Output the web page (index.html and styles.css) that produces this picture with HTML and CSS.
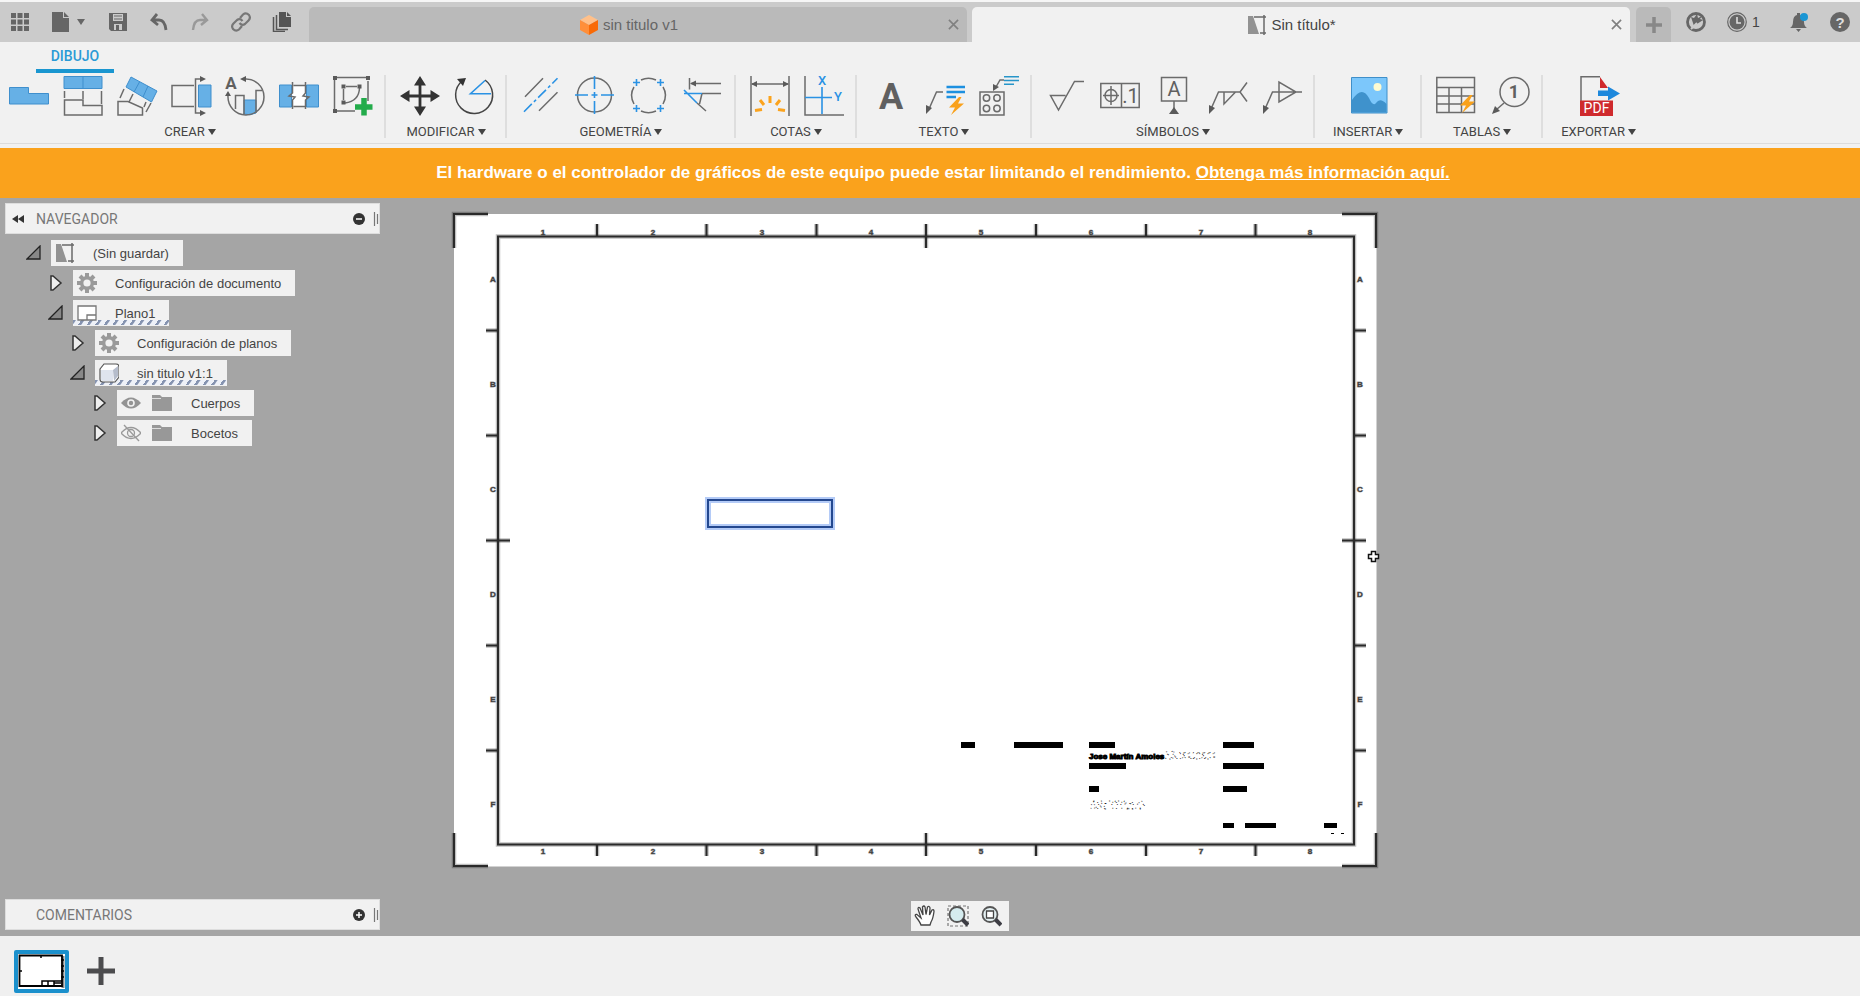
FILE: index.html
```html
<!DOCTYPE html>
<html lang="es">
<head>
  <meta charset="UTF-8">
  <meta name="viewport" content="width=device-width, initial-scale=1.0">
  <title>Sin título*</title>
  <link rel="stylesheet" href="styles.css">
</head>
<body>
  <svg class="defs" aria-hidden="true">
    <symbol id="i-gear" viewBox="0 0 20 20">
      <g stroke="#9a9a9a" stroke-width="4"><path d="M10 0V20M0 10H20M3 3L17 17M17 3L3 17"/></g>
      <circle cx="10" cy="10" r="7" fill="#9a9a9a"/><circle cx="10" cy="10" r="3.6" fill="#f1f1f1"/>
    </symbol>
    <symbol id="i-drawing" viewBox="0 0 20 20">
      <path d="M1 1H6L12 19H1Z" fill="#929292"/>
      <path d="M7 2H19M17 0V20M13 18H19" stroke="#6a6a6a" stroke-width="1.5" fill="none"/>
    </symbol>
    <symbol id="i-open" viewBox="0 0 16 16"><path d="M14 1V14H1Z" fill="#888" stroke="#222" stroke-width="1.3"/></symbol>
    <symbol id="i-closed" viewBox="0 0 16 16"><path d="M3 1H5L13 8L5 15H3Z" fill="#eee" stroke="#333" stroke-width="1.5"/></symbol>
    <symbol id="i-folder" viewBox="0 0 22 18"><path d="M1 1H9L11 3H21V17H1Z" fill="#989898"/><path d="M1 4.5H10" stroke="#ddd"/></symbol>
    <symbol id="i-close" viewBox="0 0 12 12"><path d="M1 1L11 11M11 1L1 11" stroke="#808080" stroke-width="1.8"/></symbol>
    <symbol id="i-bolt" viewBox="0 0 15 18"><path d="M10 0L0 10.5H6L2 18L15 6.5H9L12.500 0Z" fill="#f9a11b"/></symbol>
    <symbol id="i-grip" viewBox="0 0 6 14"><path d="M1.500 0V14M4.500 2V12" stroke="#777" stroke-width="1.200"/></symbol>
  </svg>

  <!-- Barra superior -->
  <header class="topbar">
    <div class="quick">
      <button aria-label="Panel de datos"><svg viewBox="0 0 20 20"><path d="M1 1h5v5H1zM7.500 1h5v5h-5zM14 1h5v5h-5zM1 7.500h5v5H1zM7.500 7.500h5v5h-5zM14 7.500h5v5h-5zM1 14h5v5H1zM7.500 14h5v5h-5zM14 14h5v5h-5z" fill="#666"/></svg></button>
      <button class="file" aria-label="Archivo"><svg viewBox="0 0 20 20"><path d="M1 0H12V6H18V20H1ZM13 0L18 5H13Z" fill="#666"/></svg><i class="caret"></i></button>
      <button aria-label="Guardar"><svg viewBox="0 0 20 20"><path d="M1 1H19V19H3L1 17Z" fill="#666"/><path d="M5 2H15V9H5ZM6 12H14V18H6Z" fill="#cbcbcb"/><path d="M6 4H14M6 7H14" stroke="#666" stroke-width="1.200"/><path d="M8 13V19H11V13Z" fill="#666"/></svg></button>
      <button aria-label="Deshacer"><svg viewBox="0 0 20 20"><path d="M8 2L3 8L9 13M3 8H10Q16 8 17 18" fill="none" stroke="#666" stroke-width="2.800"/></svg></button>
      <button aria-label="Rehacer"><svg viewBox="0 0 20 20"><path d="M12 2L17 8L11 13M17 8H10Q4 8 3 18" fill="none" stroke="#999" stroke-width="2.400"/></svg></button>
      <button aria-label="Vínculo"><svg viewBox="0 0 20 20"><g fill="none" stroke="#777" stroke-width="2.200"><path d="M9 6L12 2.500Q15 0 18 3Q20 6 17.500 8.500L14 12Q11 14 8.500 11"/><path d="M11 14L8 17.500Q5 20 2 17Q0 14 2.500 11.500L6 8Q9 6 11.500 9"/></g></svg></button>
      <button aria-label="Copias"><svg viewBox="0 0 20 20"><path d="M7 0H14V5H19V15H7ZM15 0L19 4H15Z" fill="#555"/><path d="M4.500 3V17.500H16M1.500 5V19.500H13" fill="none" stroke="#555" stroke-width="1.500"/></svg></button>
    </div>
    <nav class="tabs">
      <div class="tab">
        <a class="tab-title" href="#"><svg class="ico" viewBox="0 0 20 20"><path d="M10 0L19 5L10 10L1 5Z" fill="#ffc08a"/><path d="M1 5L10 10V20L1 15Z" fill="#ff8f3a"/><path d="M19 5L10 10V20L19 15Z" fill="#f96a06"/></svg>sin titulo v1</a>
        <button class="close" aria-label="Cerrar sin titulo v1"><svg><use href="#i-close"/></svg></button>
      </div>
      <div class="tab active">
        <a class="tab-title" href="#"><svg class="ico"><use href="#i-drawing"/></svg>Sin título*</a>
        <button class="close" aria-label="Cerrar Sin título"><svg><use href="#i-close"/></svg></button>
      </div>
    </nav>
    <button class="newtab" aria-label="Nueva pestaña"><svg viewBox="0 0 16 16"><path d="M8 0V16M0 8H16" stroke="#888" stroke-width="3.500"/></svg></button>
    <div class="status">
      <button aria-label="Extensiones"><svg viewBox="0 0 20 20"><circle cx="10" cy="10" r="8.500" fill="none" stroke="#666" stroke-width="2.800"/><path d="M5 5L8 14L17 8L14 7L16 4L12 6L11 2L8 6Z" fill="#666"/><path d="M5 17L11 11" stroke="#cbcbcb" stroke-width="2"/></svg></button>
      <button class="jobs" aria-label="Estado de trabajos"><svg viewBox="0 0 20 20"><circle cx="10" cy="10" r="9.300" fill="none" stroke="#666" stroke-width="1.200"/><circle cx="10" cy="10" r="7.500" fill="#666"/><path d="M10 5V11H14" fill="none" stroke="#ddd" stroke-width="1.600"/></svg><span>1</span></button>
      <button aria-label="Notificaciones"><svg viewBox="0 0 20 20"><path d="M8 1H11L11 3Q15 4 15 10Q15 14 18 16H1Q4 14 4 10Q4 4 8 3ZM7 17H12L9.500 20Z" fill="#666"/><circle cx="15" cy="5" r="4" fill="#1a96d4"/></svg></button>
      <button aria-label="Ayuda"><svg viewBox="0 0 20 20"><circle cx="10" cy="10" r="10" fill="#666"/><text x="10" y="15.500" class="t-help">?</text></svg></button>
    </div>
  </header>

  <!-- Cinta de herramientas -->
  <section class="ribbon">
    <a class="workspace" href="#">DIBUJO</a>
    <div class="groups">
      <div class="group">
        <div class="tools">
          <button aria-label="Vista base"><svg viewBox="0 0 40 40"><path class="b" d="M.5 11.500H19.500V17.500H39.500V28H.5Z"/></svg></button>
          <button aria-label="Vista proyectada"><svg viewBox="0 0 40 40"><path class="b" d="M1 .5H39V12.500H1ZM20 .5V12.500"/><path class="g" d="M1.500 15V22M20 15V23M38.500 15V28M1.500 24H20V29.500H39V39H1.500Z"/></svg></button>
          <button aria-label="Vista auxiliar"><svg viewBox="0 0 40 40"><path class="b" d="M14 1L40 15L34.500 26L9 11ZM22.500 6L17 16M31 10L26 21"/><path class="g" d="M7 13L3 22M16 18L12 26M29 26L27 31M34 27L29 36M1 25.500H11L25.500 32V39H1Z"/></svg></button>
          <button aria-label="Vista de sección"><svg viewBox="0 0 40 40"><path class="b" d="M27.500 9H40V31H27.500Z"/><path class="g" d="M23 9.500H1V30.500H23M30 3H24.500V37H30"/><path class="d" d="M29 0L35 3L29 6ZM29 34L35 37L29 40Z"/></svg></button>
          <button aria-label="Vista de detalle"><svg viewBox="0 0 40 40"><path class="b" d="M19 24H31V37Q25 40 19 38Z"/><path class="g" d="M20 3A18 18 0 1 1 3 20M10.500 33V19.500H19V38M31 37V14.500H37"/><path class="d" d="M15 3L21 0V6ZM0 20L3 15L6 20Z"/><text x="6" y="13" class="t-detail">A</text></svg></button>
          <button aria-label="Vista de ruptura"><svg viewBox="0 0 40 40"><path class="b" d="M.5 9H12.500V31H.5ZM27.500 9H39.500V31H27.500Z"/><path fill="#fff" d="M13 9H27V31H13Z"/><path class="g" d="M14.500 9.500H26M14.500 30.500H26M13.500 6V17L10 20L16 21L13.500 24V33M26.500 6V17L24 20L30 21L26.500 24V33"/></svg></button>
          <button aria-label="Boceto"><svg viewBox="0 0 40 40"><path class="g" d="M4 1.500H33M1.500 4V33M35 5V25M4 35H22M13 10.500H24M10.500 13V24M26.500 12Q26 25 12 27"/><path class="d" d="M0 0h4v4H0zM33 0h4v4h-4zM0 33h4v4H0zM8.500 8.500h4v4h-4zM24.500 8.500h4v4h-4zM8.500 24.500h4v4h-4z"/><path d="M31 22V39.500M22 31H39.500" stroke="#23ac4b" stroke-width="5.500"/></svg></button>
        </div>
        <button class="label">CREAR<i class="caret"></i></button>
      </div>
      <div class="group">
        <div class="tools">
          <button aria-label="Mover"><svg viewBox="0 0 40 40"><path d="M20 5V35M5 20H35" stroke="#333" stroke-width="2.800"/><path fill="#333" d="M20 0L26 9.500H14ZM20 40L26 30.500H14ZM0 20L9.500 14V26ZM40 20L30.500 14V26Z"/></svg></button>
          <button aria-label="Girar"><svg viewBox="0 0 40 40"><path d="M8 5A18.500 18.500 0 1 0 31 4" class="g dark"/><path fill="#333" d="M3 3L12 2L9 10Z"/><path class="u" d="M31 4.500L16.500 17.700H37"/></svg></button>
        </div>
        <button class="label">MODIFICAR<i class="caret"></i></button>
      </div>
      <div class="group">
        <div class="tools">
          <button aria-label="Línea de centro"><svg viewBox="0 0 40 40"><path class="g" d="M4 20.700L22 2.300M18 34.700L36.500 16.300"/><path class="u" stroke-dasharray="11 3 3 3" d="M3 35.700L36.500 2.300"/></svg></button>
          <button aria-label="Marca de centro"><svg viewBox="0 0 40 40"><circle class="g" cx="19.500" cy="19" r="17"/><path class="u" d="M19.500 0V13M19.500 16V22M19.500 25V38M0 19H13M16.500 19H22.500M26 19H39"/></svg></button>
          <button aria-label="Patrón de marcas de centro"><svg viewBox="0 0 40 40"><path class="g" d="M12 4Q19.500 .5 27 4M12 35Q19.500 38.500 27 35M5 11Q0 19 5 28M34 11Q39 19 34 28"/><path class="u" d="M7.500 3V10M4 6.500H11M31.500 3V10M28 6.500H35M7.500 29V36M4 32.500H11M31.500 29V36M28 32.500H35"/></svg></button>
          <button aria-label="Extensión de arista"><svg viewBox="0 0 40 40"><path class="g" d="M6.500 2V13.500M8 7.500H38M19 17.500H38M14 27L23 35M19 17.500L16.500 28"/><path class="u" d="M1 17.500H19M1 14L14 27"/><path class="d" d="M7 7.500L13 4.500V10.500Z"/></svg></button>
        </div>
        <button class="label">GEOMETRÍA<i class="caret"></i></button>
      </div>
      <div class="group">
        <div class="tools">
          <button aria-label="Cota"><svg viewBox="0 0 40 40"><path class="g" d="M1 0V40M39 0V40M2 8H38"/><path class="d" d="M1 8L7 5V11ZM39 8L33 5V11Z"/><path d="M20 20V27M10 24L14 29M30 24L26 29M5 34.500L12 33.500M35 34.500L28 33.500" stroke="#fba31d" stroke-width="3"/></svg></button>
          <button aria-label="Cota de coordenadas"><svg viewBox="0 0 40 40"><path class="g" d="M1 0V39H40"/><path class="u" d="M18 11V38M1 21.500H28"/><text x="18" y="9" class="t-axis">X</text><text x="34" y="25" class="t-axis">Y</text></svg></button>
        </div>
        <button class="label">COTAS<i class="caret"></i></button>
      </div>
      <div class="group">
        <div class="tools">
          <button aria-label="Texto"><svg viewBox="0 0 40 40"><text x="20" y="33" class="t-big">A</text></svg></button>
          <button aria-label="Directriz"><svg viewBox="0 0 40 40"><path class="g" d="M18 16H11.500L4 33"/><path class="d" d="M1 38L1 29L7 32Z"/><path d="M21.500 11H40M21.500 16H40M21.500 21H31" stroke="#1d90e0" stroke-width="2.600"/><svg x="24" y="21" width="15" height="18"><use href="#i-bolt"/></svg></svg></button>
          <button aria-label="Nota de agujero"><svg viewBox="0 0 40 40"><path class="g" d="M1 16H25V39H1ZM25 4H21L17 11"/><circle class="g" cx="7.500" cy="22" r="3.200"/><circle class="g" cx="18" cy="22" r="3.200"/><circle class="g" cx="7.500" cy="32.500" r="3.200"/><circle class="g" cx="18" cy="32.500" r="3.200"/><path class="d" d="M14 15V8L20 11Z"/><path d="M25 .8H40M25 4.500H40M25 8.200H35" stroke="#2795c9" stroke-width="1.500"/></svg></button>
        </div>
        <button class="label">TEXTO<i class="caret"></i></button>
      </div>
      <div class="group">
        <div class="tools">
          <button aria-label="Acabado superficial"><svg viewBox="0 0 40 40"><path class="g" d="M19.500 19.500H4.500L12.500 34L28.500 5.500H38"/></svg></button>
          <button aria-label="Tolerancia geométrica"><svg viewBox="0 0 40 40"><path class="g" d="M.8 7.500H39.200V31.500H.8ZM21.500 7.500V31.500M11 10V29M3 19.500H19"/><circle class="g" cx="11" cy="19.500" r="6"/><text x="30.500" y="27" class="t-mid">.1</text></svg></button>
          <button aria-label="Identificador de referencia"><svg viewBox="0 0 40 40"><path class="g" d="M7.500 1.500H32.500V25H7.500ZM20 25V33"/><path class="d" d="M20 31L25 38H15Z"/><text x="20" y="20" class="t-mid">A</text></svg></button>
          <button aria-label="Soldadura"><svg viewBox="0 0 40 40"><path class="g" d="M3 33L10.500 16H32M39 6.500L32 16L39 25.500M16 16V28L27.500 16"/><path class="d" d="M1 38V29L7 32Z"/></svg></button>
          <button aria-label="Conicidad"><svg viewBox="0 0 40 40"><path class="g" d="M3 33L10.500 16H40M17 6V26L34 16Z"/><path class="d" d="M1 38V29L7 32Z"/></svg></button>
        </div>
        <button class="label">SÍMBOLOS<i class="caret"></i></button>
      </div>
      <div class="group">
        <div class="tools">
          <button aria-label="Insertar imagen"><svg viewBox="0 0 40 40"><path d="M2.500 1.500H38V37H2.500Z" fill="#7cc7fb" stroke="#3f8fc9"/><circle cx="28.500" cy="11" r="4" fill="#fdfbd2"/><path d="M3 24Q13 9 20 22Q24 31 27 27Q31 21 37.500 28V36.500H3Z" fill="#3f92cc"/></svg></button>
        </div>
        <button class="label">INSERTAR<i class="caret"></i></button>
      </div>
      <div class="group">
        <div class="tools">
          <button aria-label="Tabla"><svg viewBox="0 0 40 40"><path class="g" d="M.8 1.500H38.500V36.500H.8ZM.8 11.500H38.500M.8 20H38.500M.8 28H38.500M13 11.500V36.500M25.500 11.500V36.500"/><svg x="24" y="19" width="15" height="18"><use href="#i-bolt"/></svg></svg></button>
          <button aria-label="Referencia numerada"><svg viewBox="0 0 40 40"><circle class="g" cx="24.500" cy="16" r="14.500"/><path class="g" d="M14 27L6 34"/><path class="d" d="M2 38L5 30L10 35Z"/><text x="24" y="22" class="t-num">1</text></svg></button>
        </div>
        <button class="label">TABLAS<i class="caret"></i></button>
      </div>
      <div class="group">
        <div class="tools">
          <button aria-label="Exportar PDF"><svg viewBox="0 0 40 40"><path class="g" d="M20 .8H1V25"/><path fill="#cf2a2d" d="M0 24.500H33V40H0ZM20 1L28 12H20Z"/><path fill="#1d88dc" d="M18 14.500H28V10.500L40 17.500L28 24.500V20H18Z"/><text x="16.500" y="37" class="t-pdf">PDF</text></svg></button>
        </div>
        <button class="label">EXPORTAR<i class="caret"></i></button>
      </div>
    </div>
  </section>

  <div class="banner">El hardware o el controlador de gráficos de este equipo puede estar limitando el rendimiento.&nbsp;<a href="#">Obtenga más información aquí.</a></div>

  <main class="canvas">
    <aside class="side">
      <!-- Navegador -->
      <div class="panel-head">
        <button class="collapse" aria-label="Contraer"><svg viewBox="0 0 12 8"><path d="M6 0V8L0 4ZM12 0V8L6 4Z" fill="#333"/></svg></button>
        <h2>NAVEGADOR</h2>
        <button class="round" aria-label="Minimizar"><svg viewBox="0 0 12 12"><circle cx="6" cy="6" r="6" fill="#333"/><path d="M3 6H9" stroke="#fff" stroke-width="1.500"/></svg></button>
        <svg class="grip"><use href="#i-grip"/></svg>
      </div>
      <ul class="tree">
        <li>
          <div class="row"><svg class="tw"><use href="#i-open"/></svg><span class="node"><svg class="ico"><use href="#i-drawing"/></svg><span>(Sin guardar)</span></span></div>
          <ul>
            <li><div class="row"><svg class="tw"><use href="#i-closed"/></svg><span class="node"><svg class="ico"><use href="#i-gear"/></svg><span>Configuración de documento</span></span></div></li>
            <li>
              <div class="row"><svg class="tw"><use href="#i-open"/></svg><span class="node hatch"><svg class="ico" viewBox="0 0 20 20"><path d="M1 3H19V17H1ZM10 17V12H19" fill="#fff" stroke="#777" stroke-width="1.300"/></svg><span>Plano1</span></span></div>
              <ul>
                <li><div class="row"><svg class="tw"><use href="#i-closed"/></svg><span class="node"><svg class="ico"><use href="#i-gear"/></svg><span>Configuración de planos</span></span></div></li>
                <li>
                  <div class="row"><svg class="tw"><use href="#i-open"/></svg><span class="node hatch"><svg class="ico" viewBox="0 0 20 20"><path d="M1 6L5 1H17Q20 1 20 4V14L16 19H4Q1 19 1 16Z" fill="#fff" stroke="#555" stroke-width="1.200"/><path d="M2 7H14V18H5Q2 18 2 16Z" fill="#dfe4ee"/><path d="M14 7L19 3V13L15 18Z" fill="#b5bccb"/></svg><span>sin titulo v1:1</span></span></div>
                  <ul>
                    <li><div class="row"><svg class="tw"><use href="#i-closed"/></svg><span class="node"><svg class="ico" viewBox="0 0 20 20"><path d="M0 10Q10-1 20 10Q10 21 0 10Z" fill="#939393"/><circle cx="10" cy="10" r="3.800" fill="#f1f1f1"/><circle cx="10" cy="10" r="2.200" fill="#939393"/></svg><svg class="folder"><use href="#i-folder"/></svg><span>Cuerpos</span></span></div></li>
                    <li><div class="row"><svg class="tw"><use href="#i-closed"/></svg><span class="node"><svg class="ico" viewBox="0 0 20 20"><g fill="none" stroke="#999" stroke-width="1.300"><path d="M0 10Q10-1 20 10Q10 21 0 10Z"/><circle cx="10" cy="10" r="3.500"/><path d="M3 2L18 18"/></g></svg><svg class="folder"><use href="#i-folder"/></svg><span>Bocetos</span></span></div></li>
                  </ul>
                </li>
              </ul>
            </li>
          </ul>
        </li>
      </ul>
      <!-- Comentarios -->
      <div class="panel-head comments">
        <h2>COMENTARIOS</h2>
        <button class="round" aria-label="Expandir"><svg viewBox="0 0 12 12"><circle cx="6" cy="6" r="6" fill="#333"/><path d="M3 6H9M6 3V9" stroke="#fff" stroke-width="1.500"/></svg></button>
        <svg class="grip"><use href="#i-grip"/></svg>
      </div>
    </aside>

    <!-- Plano -->
    <svg class="sheet" viewBox="0 0 930 660" role="img" aria-label="Plano1">
      <defs>
        <g id="frame">
          <path d="M4 38V4H38M892 4H926V38M4 623V656H38M892 656H926V623"/>
          <path d="M48 26.500H904V634.500H48Z"/>
          <path d="M147 14V26M256.500 14V26M366.500 14V26M476 14V38M586 14V26M696 14V26M805.500 14V26"/>
          <path d="M147 635V646M256.500 635V646M366.500 635V646M476 623V646M586 635V646M696 635V646M805.500 635V646"/>
          <path d="M36 120.500H48M36 225.500H48M36 330.500H60M36 435.500H48M36 540.500H48"/>
          <path d="M904 120.500H916M904 225.500H916M892 330.500H916M904 435.500H916M904 540.500H916"/>
        </g>
      </defs>
      <path d="M4 4H926.500V656.500H4Z" fill="#fff"/>
      <use href="#frame" class="frame-soft"/>
      <use href="#frame" class="frame-line"/>
      <g class="zone">
        <text x="93" y="25">1</text><text x="203" y="25">2</text><text x="312" y="25">3</text><text x="421" y="25">4</text><text x="531" y="25">5</text><text x="641" y="25">6</text><text x="751" y="25">7</text><text x="860" y="25">8</text>
        <text x="93" y="644">1</text><text x="203" y="644">2</text><text x="312" y="644">3</text><text x="421" y="644">4</text><text x="531" y="644">5</text><text x="641" y="644">6</text><text x="751" y="644">7</text><text x="860" y="644">8</text>
        <text x="43" y="72">A</text><text x="43" y="177">B</text><text x="43" y="282">C</text><text x="43" y="387">D</text><text x="43" y="492">E</text><text x="43" y="597">F</text>
        <text x="910" y="72">A</text><text x="910" y="177">B</text><text x="910" y="282">C</text><text x="910" y="387">D</text><text x="910" y="492">E</text><text x="910" y="597">F</text>
      </g>
      <rect x="258" y="290" width="124" height="27" class="view-halo"/>
      <rect x="258" y="290" width="124" height="27" class="view-line"/>
      <!-- cajetín -->
      <path d="M511 532h14v6h-14zM564 532h49v6h-49zM639 532h26v6h-26zM773 532h31v6h-31zM639 553h37v6h-37zM773 553h41v6h-41zM639 576h10v6h-10zM773 576h24v6h-24zM773 613h11v5h-11zM795 613h31v5h-31zM874 613h13v5h-13zM881 623h3v1h-3zM891 623h3v1h-3z"/>
      <text x="639" y="549" class="author">Jose Martín Amoles</text>
      <text x="715" y="549" class="faint">16.03.2023</text>
      <text x="640" y="599" class="faint">SIN TITULO</text>
      <path d="M921.500 341.500h4v3h3v4h-3v3h-4v-3h-3v-4h3z" fill="#fff" stroke="#111" stroke-width="1.500"/>
    </svg>

    <div class="viewbar">
      <button aria-label="Encuadre"><svg viewBox="0 0 22 22"><path d="M7 20Q6 17 2 12Q0 9 3 9.500L7 13L4 4Q4 1.500 6 3L9 10L8.500 2Q10 0 11 2L12 9.500L13.500 2Q15.500 .5 16 3L15.500 10L18 5Q20 4 20 6.500Q19 14 17 17L16 20Z" fill="#fff" stroke="#444" stroke-width="1.300"/></svg></button>
      <button aria-label="Zoom ventana"><svg viewBox="0 0 22 22"><path d="M1 1H21V21H1Z" fill="none" stroke="#777" stroke-width="1.200" stroke-dasharray="3 2"/><circle cx="10" cy="9.500" r="7.500" fill="#d5ecef" stroke="#555" stroke-width="1.800"/><path d="M15.500 14.500L21 20" stroke="#3d3d44" stroke-width="4"/></svg></button>
      <button aria-label="Ajustar"><svg viewBox="0 0 22 22"><circle cx="10" cy="9.500" r="7.500" fill="#e4f0f2" stroke="#555" stroke-width="1.800"/><path d="M6.500 6H13.500V13H6.500Z" fill="#fff" stroke="#444" stroke-width="1.300"/><path d="M15.500 14.500L21 20" stroke="#3d3d44" stroke-width="4"/></svg></button>
    </div>
  </main>

  <footer class="sheets">
    <button class="thumb" aria-label="Plano1"><svg viewBox="0 0 47 35"><path d="M0 0H47V35H0Z" fill="#fff"/><path d="M45 2V34" stroke="#888" stroke-width="3"/><path d="M1.500 1.500H44V32H1.500Z" fill="none" stroke="#000" stroke-width="1.800"/><path d="M23 1V4M2 17H4M24 32V27H44M30 27V32M36 27V32M43 6H46M43 12H46M43 17H46M43 23H46M36 29H43" fill="none" stroke="#000" stroke-width="1.500"/></svg></button>
    <button class="add" aria-label="Añadir plano"><svg viewBox="0 0 28 28"><path d="M14 0V28M0 14H28" stroke="#4c4c4e" stroke-width="5"/></svg></button>
  </footer>
</body>
</html>
```
FILE: styles.css
```css
* {
  margin: 0;
  padding: 0;
  box-sizing: border-box;
}
body {
  display: flex;
  flex-direction: column;
  min-height: 100vh;
  font-family: "Liberation Sans", Arial, sans-serif;
  font-size: 13px;
  color: #444;
  background: #f1f1f1;
}
button {
  border: 0;
  background: none;
  font: inherit;
  color: inherit;
  cursor: pointer;
}
a {
  color: inherit;
  text-decoration: none;
}
ul {
  list-style: none;
}
svg {
  display: block;
  flex: none;
}
.defs {
  position: absolute;
  width: 0;
  height: 0;
}
.ico {
  width: 20px;
  height: 20px;
}
.caret {
  display: inline-block;
  border: 4px solid transparent;
  border-top: 6px solid #444;
  border-bottom: 0;
}

/* barra superior */
.topbar {
  display: flex;
  height: 42px;
  border-top: 2px solid #f6f6f6;
  background: #cbcbcb;
}
.quick {
  display: flex;
  align-items: center;
  gap: 21px;
  padding: 0 17px 0 10px;
}
.quick svg,
.status svg {
  width: 20px;
  height: 20px;
}
.file {
  display: flex;
  align-items: center;
  gap: 6px;
  width: 36px;
}
.file .caret {
  border-top-color: #666;
}
.tabs {
  flex: 1;
  display: flex;
  gap: 5px;
  padding-top: 5px;
}
.tab {
  flex: 1 1 0;
  display: flex;
  align-items: center;
  padding-right: 8px;
  border-radius: 5px 5px 0 0;
  background: #bababa;
  color: #666;
}
.tab.active {
  background: #f1f1f1;
  color: #444;
}
.tab-title {
  flex: 1;
  display: flex;
  align-items: center;
  justify-content: center;
  gap: 4px;
  font-size: 15px;
}
.close svg {
  width: 11px;
  height: 11px;
}
.newtab {
  display: flex;
  align-items: center;
  justify-content: center;
  width: 35px;
  margin: 5px 0 0 6px;
  border-radius: 5px 5px 0 0;
  background: #bababa;
}
.newtab svg {
  width: 16px;
  height: 16px;
}
.status {
  display: flex;
  align-items: center;
  gap: 21px;
  padding: 0 10px 0 15px;
}
.jobs {
  display: flex;
  align-items: center;
  gap: 5px;
  width: 41px;
  font-size: 14px;
}
.t-help {
  font: bold 15px "Liberation Sans", sans-serif;
  fill: #ddd;
  text-anchor: middle;
}

/* cinta */
.ribbon {
  height: 102px;
  border-bottom: 1px solid #dcdcdc;
}
.workspace {
  display: block;
  width: 78px;
  height: 31px;
  margin-left: 36px;
  padding-top: 4px;
  border-bottom: 4px solid #1a96d0;
  font: 500 14px/20px Roboto, sans-serif;
  color: #2a9ad6;
  text-align: center;
}
.groups {
  display: flex;
  padding-top: 2px;
}
.group {
  display: flex;
  flex-direction: column;
  align-items: center;
  height: 63px;
  padding: 1px 11px 0 14px;
  border-right: 2px solid #dedede;
}
.group:first-child {
  padding-left: 9px;
}
.group:last-child {
  border-right: 0;
}
.tools {
  display: flex;
  gap: 14px;
}
.tools > button > svg {
  width: 40px;
  height: 40px;
  overflow: visible;
}
.label {
  display: flex;
  align-items: center;
  gap: 3px;
  margin-top: 9px;
  padding: 0 6px 0 4px;
  font: 13px/14px Roboto, sans-serif;
  white-space: nowrap;
}
.g {
  fill: none;
  stroke: #6b6b6b;
  stroke-width: 1.500;
}
.dark {
  stroke: #444;
}
.b {
  fill: #66b0e6;
  stroke: #3f8fcd;
}
.u {
  fill: none;
  stroke: #2a92e4;
  stroke-width: 1.600;
}
.d {
  fill: #5a5a5a;
}
.tools text {
  font-family: Roboto, sans-serif;
  font-weight: bold;
  text-anchor: middle;
  fill: #606060;
}
.t-detail {
  font-size: 17px;
}
.tools .t-axis {
  font-size: 13px;
  font-weight: 500;
  fill: #2a92e4;
}
.t-big {
  font-size: 36px;
}
.tools .t-mid {
  font-size: 20px;
  font-weight: 400;
}
.t-num {
  font-size: 18px;
}
.tools .t-pdf {
  font-size: 14px;
  font-weight: 400;
  fill: #fff;
}

.banner {
  margin-top: 4px;
  padding-left: 26px;
  background: #faa21c;
  color: #fff;
  font-size: 17px;
  font-weight: bold;
  line-height: 50px;
  text-align: center;
}
.banner a {
  text-decoration: underline;
}

/* zona de dibujo */
.canvas {
  flex: 1;
  position: relative;
  display: flex;
  align-items: flex-start;
  background: #a5a5a5;
}
.side {
  align-self: stretch;
  display: flex;
  flex-direction: column;
  width: 380px;
  padding: 5px 0 6px 5px;
}
.panel-head {
  display: flex;
  align-items: center;
  height: 31px;
  padding-left: 6px;
  border: 1px solid #ddd;
  background: #f1f1f1;
}
.panel-head h2 {
  flex: 1;
  margin-left: 12px;
  font: 14px Roboto, sans-serif;
  color: #777;
}
.comments {
  margin-top: auto;
}
.comments h2 {
  margin-left: 24px;
}
.collapse svg {
  width: 12px;
  height: 8px;
}
.round svg {
  width: 12px;
  height: 12px;
}
.grip {
  width: 6px;
  height: 14px;
  margin-left: 8px;
}
.tree {
  padding: 6px 0 0 21px;
}
.tree ul {
  padding-left: 22px;
}
.row {
  display: flex;
  align-items: center;
  gap: 9px;
  height: 26px;
  margin-bottom: 4px;
}
.tw {
  width: 16px;
  height: 16px;
}
.node {
  display: flex;
  align-items: center;
  height: 26px;
  padding: 0 14px 0 4px;
  background: #f1f1f1;
  white-space: nowrap;
}
.node span {
  margin-left: 18px;
}
.folder {
  width: 22px;
  height: 18px;
  margin-left: 10px;
}
.hatch {
  background: repeating-linear-gradient(125deg, #8593b0 0 2px, #eef1f8 3px 7px) 0 20px / 100% 5px no-repeat #f1f1f1;
}

.sheet {
  width: 930px;
  height: 660px;
  margin: 12px 0 0 70px;
}
.frame-soft {
  fill: none;
  stroke: rgba(0, 0, 0, .25);
  stroke-width: 4.500;
}
.frame-line {
  fill: none;
  stroke: #2a2a2a;
  stroke-width: 2;
}
.zone {
  font: bold 8px "Liberation Sans", sans-serif;
  text-anchor: middle;
  fill: #444;
  stroke: rgba(60, 60, 60, .5);
  stroke-width: 1;
}
.view-halo {
  fill: none;
  stroke: #b4cbf7;
  stroke-width: 6;
}
.view-line {
  fill: none;
  stroke: #24488f;
  stroke-width: 2;
}
.author {
  font: bold 8px "Liberation Sans", sans-serif;
  stroke: #000;
  stroke-width: 1;
}
.faint {
  font: 10px "Liberation Sans", sans-serif;
  fill: none;
  stroke: #222;
  stroke-width: .8;
  stroke-dasharray: 1 5;
}
.viewbar {
  position: absolute;
  left: 49%;
  bottom: 5px;
  display: flex;
  gap: 11px;
  padding: 4px 7px 4px 3px;
  background: #f1f1f1;
}
.viewbar svg {
  width: 22px;
  height: 22px;
}

.sheets {
  display: flex;
  align-items: center;
  gap: 18px;
  height: 60px;
  padding: 10px 14px 0;
  background: #f0f0f0;
}
.thumb {
  width: 55px;
  height: 43px;
  border: 4px solid #1b90cc;
  border-radius: 2px;
}
.add svg {
  width: 28px;
  height: 28px;
}
```
